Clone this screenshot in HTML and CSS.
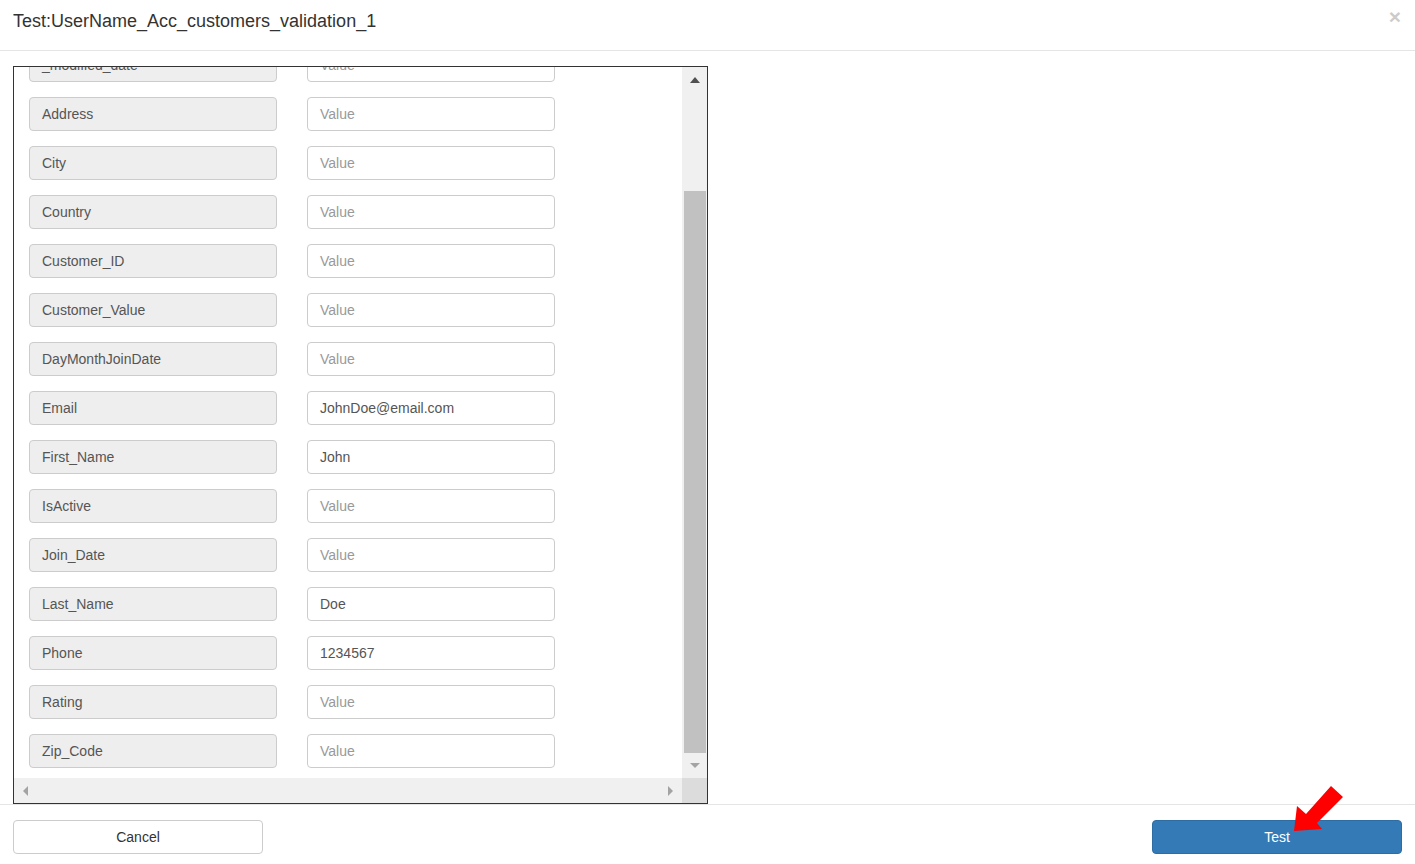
FILE: index.html
```html
<!DOCTYPE html>
<html>
<head>
<meta charset="utf-8">
<link rel="stylesheet" href="styles.css">
</head>
<body>
<div class="modal">
  <div class="header">
    <div class="title">Test:UserName_Acc_customers_validation_1</div>
    <div class="close">×</div>
  </div>
  <div class="body">
    <div class="box">
      <div class="viewport">
        <div class="rows">
          <div class="row"><div class="label">_modified_date</div><div class="input ph">Value</div></div>
          <div class="row"><div class="label">Address</div><div class="input ph">Value</div></div>
          <div class="row"><div class="label">City</div><div class="input ph">Value</div></div>
          <div class="row"><div class="label">Country</div><div class="input ph">Value</div></div>
          <div class="row"><div class="label">Customer_ID</div><div class="input ph">Value</div></div>
          <div class="row"><div class="label">Customer_Value</div><div class="input ph">Value</div></div>
          <div class="row"><div class="label">DayMonthJoinDate</div><div class="input ph">Value</div></div>
          <div class="row"><div class="label">Email</div><div class="input">JohnDoe@email.com</div></div>
          <div class="row"><div class="label">First_Name</div><div class="input">John</div></div>
          <div class="row"><div class="label">IsActive</div><div class="input ph">Value</div></div>
          <div class="row"><div class="label">Join_Date</div><div class="input ph">Value</div></div>
          <div class="row"><div class="label">Last_Name</div><div class="input">Doe</div></div>
          <div class="row"><div class="label">Phone</div><div class="input">1234567</div></div>
          <div class="row"><div class="label">Rating</div><div class="input ph">Value</div></div>
          <div class="row"><div class="label">Zip_Code</div><div class="input ph">Value</div></div>
        </div>
      </div>
      <div class="vscroll">
        <div class="arr up"></div>
        <div class="vtrack"><div class="vthumb"></div></div>
        <div class="arr down"></div>
      </div>
      <div class="hscroll">
        <div class="arr left"></div>
        <div class="arr right"></div>
      </div>
      <div class="corner"></div>
    </div>
  </div>
  <div class="footer">
    <button class="btn cancel">Cancel</button>
    <button class="btn primary">Test</button>
  </div>
  <svg class="pointer" width="70" height="60" viewBox="1285 780 70 60">
    <polygon points="1294,831 1297,806 1306,814 1331,786 1343,797 1317,823 1322,829" fill="#ff0000"/>
  </svg>
</div>
</body>
</html>
```
FILE: styles.css
```css
html, body {
  margin: 0;
  padding: 0;
  background: #fff;
  font-family: "Liberation Sans", Arial, sans-serif;
}
.modal {
  position: relative;
  width: 1415px;
  height: 864px;
  overflow: hidden;
}
.header {
  height: 50px;
  border-bottom: 1px solid #e5e5e5;
  display: flex;
  justify-content: space-between;
  align-items: flex-start;
  padding: 0 13px;
}
.title {
  font-size: 18px;
  color: #333;
  line-height: 20px;
  padding-top: 11px;
}
.close {
  font-size: 21px;
  font-weight: bold;
  color: #000;
  opacity: 0.2;
  line-height: 20px;
  padding-top: 7px;
  margin-right: 1px;
}
.body {
  padding: 15px 13px 0;
}
.box {
  width: 693px;
  height: 736px;
  border: 1px solid #333;
  display: grid;
  grid-template-columns: 1fr 25px;
  grid-template-rows: 1fr 25px;
}
.viewport {
  overflow: hidden;
}
.rows {
  margin-top: -19px;
  padding-left: 15px;
  display: flex;
  flex-direction: column;
  gap: 15px;
}
.row {
  display: flex;
  gap: 30px;
}
.label, .input {
  box-sizing: border-box;
  width: 248px;
  height: 34px;
  border: 1px solid #ccc;
  border-radius: 4px;
  padding: 0 12px;
  font-size: 14px;
  line-height: 32px;
  color: #555;
}
.label {
  background: #eee;
}
.input {
  background: #fff;
}
.input.ph {
  color: #999;
}
.vscroll {
  background: #f0f0f0;
  display: flex;
  flex-direction: column;
}
.vtrack {
  flex: 1;
  display: flex;
  flex-direction: column;
  justify-content: flex-end;
  padding: 0 1px 0 2px;
}
.vthumb {
  height: 562px;
  background: #c1c1c1;
}
.arr {
  width: 0;
  height: 0;
}
.up {
  margin: 10px auto 8px;
  border-left: 5px solid transparent;
  border-right: 5px solid transparent;
  border-bottom: 6px solid #505050;
}
.down {
  margin: 10px auto 10px;
  border-left: 5px solid transparent;
  border-right: 5px solid transparent;
  border-top: 5px solid #a3a3a3;
}
.hscroll {
  background: #f0f0f0;
  display: flex;
  justify-content: space-between;
  align-items: center;
  padding: 0 9px;
}
.left {
  border-top: 5px solid transparent;
  border-bottom: 5px solid transparent;
  border-right: 5px solid #a3a3a3;
}
.right {
  border-top: 5px solid transparent;
  border-bottom: 5px solid transparent;
  border-left: 5px solid #a3a3a3;
}
.corner {
  background: #dcdcdc;
}
.footer {
  margin-top: 0;
  border-top: 1px solid #e5e5e5;
  padding: 15px 13px;
  display: flex;
  justify-content: space-between;
}
.btn {
  width: 250px;
  height: 34px;
  border-radius: 4px;
  font-family: "Liberation Sans", Arial, sans-serif;
  font-size: 14px;
  cursor: pointer;
}
.cancel {
  background: #fff;
  border: 1px solid #ccc;
  color: #333;
}
.primary {
  background: #337ab7;
  border: 1px solid #2e6da4;
  color: #fff;
}
.pointer {
  position: absolute;
  left: 1285px;
  top: 780px;
}
```
